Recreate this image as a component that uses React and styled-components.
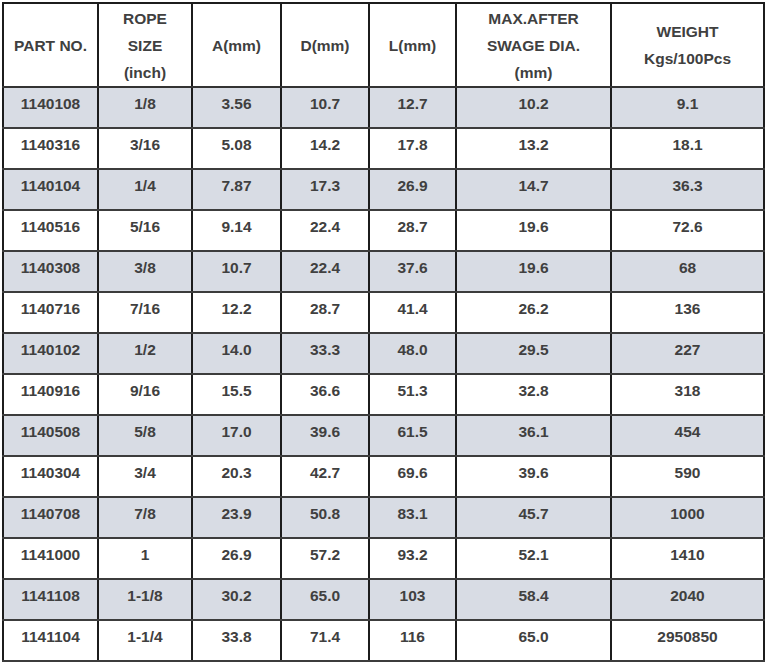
import React from "react"
import styled, { createGlobalStyle } from "styled-components"

const GlobalStyle = createGlobalStyle`
  html, body {
    margin: 0;
    padding: 0;
    background: #fff;
  }
  body {
    font-family: "Liberation Sans", Arial, sans-serif;
  }
`

const Page = styled.div`
  padding: 2px 3px 0 2px;
`

const Table = styled.table`
  width: 762px;
  table-layout: fixed;
  border-collapse: collapse;
  border: 2px solid #1c1c1c;
  color: #404040;
  font-size: 15.5px;
  font-weight: bold;
`

const HeadCell = styled.th`
  height: 82px;
  border: 2px solid #1c1c1c;
  border-bottom-color: #333;
  padding: 0 4px;
  text-align: center;
  vertical-align: middle;
  font-weight: bold;
  line-height: 27px;
  color: #404040;
`

const Row = styled.tr`
  background: ${p => (p.shaded ? "#d8dce4" : "#fff")};
`

const Cell = styled.td`
  height: 37px;
  border-left: 2px solid #1c1c1c;
  border-right: 2px solid #1c1c1c;
  border-bottom: 2px solid #3c3c3c;
  padding: 2px 4px 0;
  text-align: center;
  vertical-align: top;
  line-height: 27px;
`

const widths = [95, 94, 89, 88, 87, 155, 153]

const headers = [
  ["PART NO."],
  ["ROPE", "SIZE", "(inch)"],
  ["A(mm)"],
  ["D(mm)"],
  ["L(mm)"],
  ["MAX.AFTER", "SWAGE DIA.", "(mm)"],
  ["WEIGHT", "Kgs/100Pcs"],
]

const rows = [
  ["1140108", "1/8", "3.56", "10.7", "12.7", "10.2", "9.1"],
  ["1140316", "3/16", "5.08", "14.2", "17.8", "13.2", "18.1"],
  ["1140104", "1/4", "7.87", "17.3", "26.9", "14.7", "36.3"],
  ["1140516", "5/16", "9.14", "22.4", "28.7", "19.6", "72.6"],
  ["1140308", "3/8", "10.7", "22.4", "37.6", "19.6", "68"],
  ["1140716", "7/16", "12.2", "28.7", "41.4", "26.2", "136"],
  ["1140102", "1/2", "14.0", "33.3", "48.0", "29.5", "227"],
  ["1140916", "9/16", "15.5", "36.6", "51.3", "32.8", "318"],
  ["1140508", "5/8", "17.0", "39.6", "61.5", "36.1", "454"],
  ["1140304", "3/4", "20.3", "42.7", "69.6", "39.6", "590"],
  ["1140708", "7/8", "23.9", "50.8", "83.1", "45.7", "1000"],
  ["1141000", "1", "26.9", "57.2", "93.2", "52.1", "1410"],
  ["1141108", "1-1/8", "30.2", "65.0", "103", "58.4", "2040"],
  ["1141104", "1-1/4", "33.8", "71.4", "116", "65.0", "2950850"],
]

const App = () => {
  return (
    <Page>
      <GlobalStyle />
      <Table>
        <colgroup>
          {widths.map((w, i) => (
            <col key={i} style={{ width: w }} />
          ))}
        </colgroup>
        <thead>
          <tr>
            {headers.map((h, i) => (
              <HeadCell key={i}>
                {h.map((line, j) => (
                  <div key={j}>{line}</div>
                ))}
              </HeadCell>
            ))}
          </tr>
        </thead>
        <tbody>
          {rows.map((r, i) => (
            <Row key={r[0]} shaded={i % 2 === 0}>
              {r.map((v, j) => (
                <Cell key={j}>{v}</Cell>
              ))}
            </Row>
          ))}
        </tbody>
      </Table>
    </Page>
  )
}

export default App
